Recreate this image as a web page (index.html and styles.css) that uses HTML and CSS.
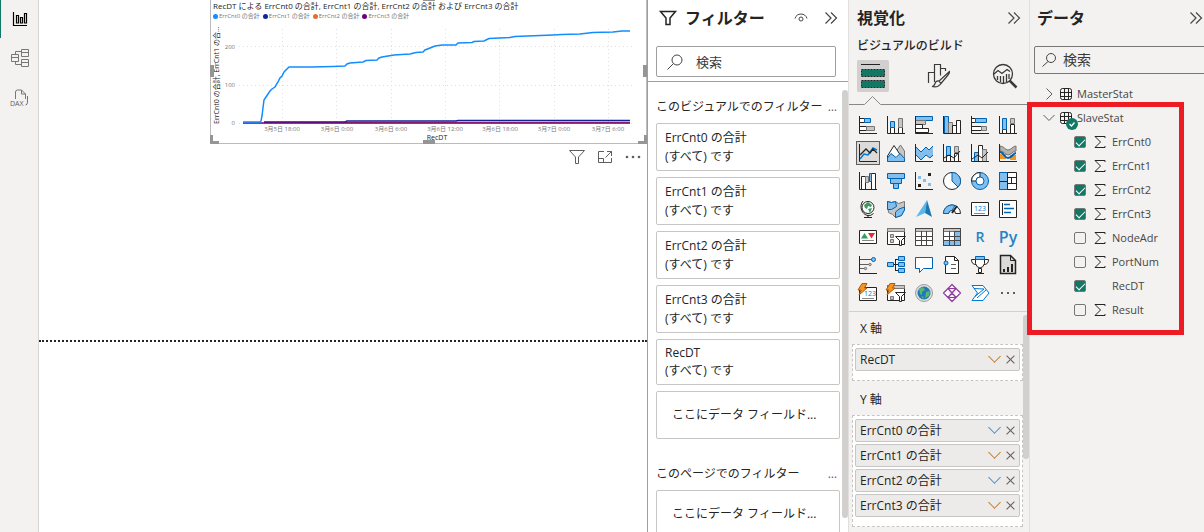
FILE: index.html
```html
<!DOCTYPE html>
<html lang="ja">
<head>
    <meta charset="UTF-8">
    <meta name="viewport" content="width=device-width, initial-scale=1">
    <title>レポート</title>
    <link rel="stylesheet" href="styles.css">
</head>
<body>
<div class="app">

    <nav class="rail">
        <button class="rail-btn active" aria-label="レポート">
            <svg width="18" height="18" viewBox="0 0 18 18"><path d="M2.500 2v13.500H16M5.500 13V5.500h2V13zM9.500 13V7.500h2V13zM13.500 13V3.500h2V13z" fill="none" stroke="#000" stroke-width="1.200"/></svg>
        </button>
        <button class="rail-btn" aria-label="モデル">
            <svg width="18" height="18" viewBox="0 0 18 18"><path d="M.5 5.500h7v7h-7zM.5 8.500h7M10.500.5h7v7h-7zM10.500 3.500h7M10.500 10.500h7v7h-7zM10.500 13.500h7M4.500 5.500v-3h6M4.500 12.500v3h6" fill="none" stroke="#797775"/></svg>
        </button>
        <button class="rail-btn" aria-label="DAX">
            <svg width="20" height="18" viewBox="0 0 20 18"><path d="M5.500 10V3q0-2 2-2h4l4 4v5M11.500 1v4h4M17.500 7v6q0 3-2 3" fill="none" stroke="#797775"/><text x="0" y="17" class="dax">DAX</text></svg>
        </button>
    </nav>

    <main class="canvas">
        <div class="page">
            <div class="visual">
                <h1 class="visual-title">RecDT による ErrCnt0 の合計, ErrCnt1 の合計, ErrCnt2 の合計 および ErrCnt3 の合計</h1>
                <ul class="legend">
                    <li><i class="dot s0"></i>ErrCnt0 の合計</li>
                    <li><i class="dot s1"></i>ErrCnt1 の合計</li>
                    <li><i class="dot s2"></i>ErrCnt2 の合計</li>
                    <li><i class="dot s3"></i>ErrCnt3 の合計</li>
                </ul>
                <svg class="plot" viewBox="211 22 435 120">
                    <path class="grid" d="M239 46.500H632M239 85.500H632M239 123.500H632M282.500 29v94M336.500 29v94M391.500 29v94M445.500 29v94M499.500 29v94M554.500 29v94M608.500 29v94"/>
                    <g class="tick end">
                        <text x="235" y="49">200</text>
                        <text x="235" y="87">100</text>
                        <text x="235" y="125">0</text>
                    </g>
                    <g class="tick mid">
                        <text x="282" y="131">3月5日 18:00</text>
                        <text x="337" y="131">3月6日 0:00</text>
                        <text x="391" y="131">3月6日 6:00</text>
                        <text x="445" y="131">3月6日 12:00</text>
                        <text x="500" y="131">3月6日 18:00</text>
                        <text x="554" y="131">3月7日 0:00</text>
                        <text x="608" y="131">3月7日 6:00</text>
                    </g>
                    <text class="axis mid" x="437" y="140">RecDT</text>
                    <text class="axis" transform="translate(219 124) rotate(-90)">ErrCnt0 の合計, ErrCnt1 の合…</text>
                    <path class="line" stroke="#e66c37" d="M264 122.500H630"/>
                    <path class="line" stroke="#12239e" d="M264 122H345L347 121H456L458 120.500H630"/>
                    <path class="line" stroke="#6b007b" d="M243 123H630"/>
                    <path class="line" stroke="#118dff" d="M243 122H260L261 121L262 116L264 100L266 97L270 91L272 89L275 87L278 82L280 78L282 76L284 72L289 67H312L333 66.500L345 66L347 64L350 63L363 62L366 60.500L377 60L379 58L382 57L388 56L394 55L410 54L416 52.500L423 52L425 50L430 48L435 46L442 45H456L458 43L472 42.500L474 41.500L484 41L489 38.500L510 37.500L515 36.500L553 35L562 34.500L580 34L593 32.500L613 32L622 31H630"/>
                </svg>
                <span class="handle t"></span><span class="handle l"></span><span class="handle r"></span><span class="handle b"></span>
                <span class="corner bl"></span><span class="corner br"></span>
            </div>
            <div class="visual-tools">
                <button aria-label="フィルター"><svg width="16" height="16" viewBox="0 0 16 16"><path d="M.5 1.500h15L9.500 8v6.500h-3V8z" fill="none" stroke="#605e5c"/></svg></button>
                <button aria-label="フォーカス モード"><svg width="16" height="16" viewBox="0 0 16 16"><path d="M7 2.500H1.500v11h13V9M1.500 9.500h5v4M8.500 8.500l6-6M10 2.500h4.500V7" fill="none" stroke="#605e5c"/></svg></button>
                <button aria-label="その他のオプション"><svg width="16" height="16" viewBox="0 0 16 16" fill="#605e5c"><circle cx="2" cy="8" r="1.300"/><circle cx="8" cy="8" r="1.300"/><circle cx="14" cy="8" r="1.300"/></svg></button>
            </div>
        </div>
    </main>

    <section class="filters">
        <header class="panel-head">
            <svg width="18" height="18" viewBox="0 0 18 18"><path d="M1.500 2.500h15L11 9v6.500H7V9z" fill="none" stroke="#252423" stroke-width="1.500"/></svg>
            <h2>フィルター</h2>
            <button class="eye" aria-label="表示"><svg width="14" height="14" viewBox="0 0 14 14"><path d="M1 7.500C2.500 1.500 11.500 1.500 13 7.500" fill="none" stroke="#484644"/><circle cx="7" cy="8" r="2" fill="none" stroke="#484644"/></svg></button>
            <button aria-label="折りたたむ"><svg width="14" height="14" viewBox="0 0 14 14"><path d="M1.500 1.500L7 7l-5.500 5.500M7 1.500L12.500 7 7 12.500" fill="none" stroke="#484644" stroke-width="1.200"/></svg></button>
        </header>
        <label class="search">
            <svg width="16" height="16" viewBox="0 0 16 16"><circle cx="10" cy="6" r="5" fill="none" stroke="#484644"/><path d="M6.500 9.500L.5 15.500" stroke="#484644"/></svg>
            <input type="text" placeholder="検索" aria-label="検索">
        </label>
        <div class="filter-body">
            <div class="filter-list">
                <h3>このビジュアルでのフィルター<button aria-label="その他">…</button></h3>
                <div class="card"><p>ErrCnt0 の合計</p><p>(すべて) です</p></div>
                <div class="card"><p>ErrCnt1 の合計</p><p>(すべて) です</p></div>
                <div class="card"><p>ErrCnt2 の合計</p><p>(すべて) です</p></div>
                <div class="card"><p>ErrCnt3 の合計</p><p>(すべて) です</p></div>
                <div class="card"><p class="short">RecDT</p><p>(すべて) です</p></div>
                <div class="card drop">ここにデータ フィールド...</div>
                <h3 class="second">このページでのフィルター<button aria-label="その他">…</button></h3>
                <div class="card drop">ここにデータ フィールド...</div>
            </div>
            <div class="scroll"></div>
        </div>
    </section>

    <section class="viz">
        <header class="panel-head">
            <h2>視覚化</h2>
            <button aria-label="折りたたむ"><svg width="14" height="14" viewBox="0 0 14 14"><path d="M1.500 1.500L7 7l-5.500 5.500M7 1.500L12.500 7 7 12.500" fill="none" stroke="#484644" stroke-width="1.200"/></svg></button>
        </header>
        <h3 class="build">ビジュアルのビルド</h3>
        <div class="tabs">
            <button class="tab on" aria-label="ビルド"><svg width="24" height="26" viewBox="0 0 24 26"><path d="M0 1.500h19" stroke="#252423"/><path d="M.5 6.500h23v7H.5zM.5 17.500h23v7H.5z" fill="#117865" stroke="#252423" stroke-dasharray="2 1"/></svg></button>
            <button class="tab" aria-label="書式"><svg width="24" height="26" viewBox="0 0 24 26"><path d="M1.500 20V9.500h6V19M7.500 9.500v-8h6v11M13.500 5.500h5V8M22.500 8.500L12 18l2 2.500L21 12q2-2.500 1.500-3.500zM12 18q-3-.5-4 2.500t-3 3q6 1.500 9-3" fill="none" stroke="#3b3a39" stroke-width="1.200"/></svg></button>
            <button class="tab" aria-label="分析"><svg width="26" height="26" viewBox="0 0 26 26"><circle cx="11" cy="11" r="9.500" fill="none" stroke="#3b3a39" stroke-width="1.300"/><path d="M2 11l4-3.500 4 3 5-4 3 2M5.500 17v-4M8.500 19v-6M11.500 20v-7M14.500 19v-8M17 16v-5" fill="none" stroke="#3b3a39" stroke-width="1.300"/><path d="M17.500 17.500l7 7" stroke="#3b3a39" stroke-width="2.500"/></svg></button>
        </div>
        <svg class="caret" width="180" height="10" viewBox="0 0 180 10"><path d="M0 9.500h15.500l8-8 8 8H180" fill="none" stroke="#8a8886"/></svg>

        <div class="gallery">
            <button><svg viewBox="0 0 18 18"><path class="w" d="M.5 2.500h5v4h-5zM.5 10.500h7v4h-7z"/><path class="b" d="M5.500 2.500h6v4h-6z"/><path class="g" d="M7.500 10.500h8v4h-8z"/><path class="k" d="M.5 0v17.500H18"/></svg></button>
            <button><svg viewBox="0 0 18 18"><path class="w" d="M3.500 11.500h4v6h-4zM11.500 11.500h4v6h-4z"/><path class="b" d="M3.500 5.500h4v6h-4z"/><path class="g" d="M11.500 2.500h4v9h-4z"/><path class="k" d="M.5 0v17.500H18"/></svg></button>
            <button><svg viewBox="0 0 18 18"><path class="b" d="M.5.5h17v4H.5z"/><path class="g" d="M.5 4.500h10v4H.5z"/><path class="w" d="M.5 8.500h7v4h-7zM.5 12.500h13v4H.5z"/><path class="k" d="M.5 0v17.500H18"/></svg></button>
            <button><svg viewBox="0 0 18 18"><path class="b" d="M1.500.5h4v17h-4z"/><path class="g" d="M5.500 6.500h4v11h-4z"/><path class="w" d="M9.500 9.500h4v8h-4zM13.500 4.500h4v13h-4z"/><path class="k" d="M.5 0v17.500H18"/></svg></button>
            <button><svg viewBox="0 0 18 18"><path class="w" d="M.5 2.500h4v4h-4zM.5 10.500h10v4H.5z"/><path class="b" d="M4.500 2.500h11v4h-11z"/><path class="g" d="M10.500 10.500h5v4h-5z"/><path class="k" d="M.5 0v17.500H18"/></svg></button>
            <button><svg viewBox="0 0 18 18"><path class="w" d="M3.500 13.500h4v4h-4zM11.500 8.500h4v9h-4z"/><path class="b" d="M3.500 2.500h4v11h-4z"/><path class="g" d="M11.500 2.500h4v5h-4z"/><path class="k" d="M.5 0v17.500H18"/></svg></button>

            <button class="on"><svg viewBox="0 0 18 18"><path d="M1 15l4-5 4 1 5-7 4 2" fill="none" stroke="#0078d4" stroke-width="1.500"/><path d="M1 11l6-6 4 4 3-4 4 4" fill="none" stroke="#252423" stroke-width="1.300"/><path class="k" d="M.5 0v17.500H18"/></svg></button>
            <button><svg viewBox="0 0 18 18"><path class="g" d="M8 9l5.500-8L17.500 7v10.500z"/><path class="w" d="M.5 12L7 1.500l7 10.500-3 5H.5z"/><path class="b" d="M.5 17.500V14L4 9.500l5 4 4-4 4.500 5v3z"/></svg></button>
            <button><svg viewBox="0 0 18 18"><path d="M1 3l5 5 5-5 3 3 4-4v10l-3 2-4-3-5 5-5-5z" fill="#83beec"/><path d="M1 3l5 5 5-5 3 3 4-4M1 11l5 5 5-5 4 3 3-3" fill="none" stroke="#0063b1"/><path class="k" d="M.5 0v17.500H18"/></svg></button>
            <button><svg viewBox="0 0 18 18"><path class="b" d="M3.500 2.500h4v9h-4z"/><path class="g" d="M11.500 2.500h4v6h-4z"/><path class="w" d="M3.500 11.500h4v6h-4zM11.500 9.500h4v8h-4z"/><path class="k" d="M.5 0v17.500H18M1 14l5-3 5 3 6-7"/></svg></button>
            <button><svg viewBox="0 0 18 18"><path class="b" d="M3.500 8.500h4v9h-4z"/><path class="w" d="M7.500 1.500h4v16h-4z"/><path class="g" d="M11.500 5.500h4v12h-4z"/><path class="k" d="M.5 0v17.500H18M1 15l6-4 4 3 6-6"/></svg></button>
            <button><svg viewBox="0 0 18 18"><path d="M1 10h6v5H1zM11 11h6v5h-6z" fill="#f7941d"/><path d="M1 2c4 0 5 4 8 4s5-4 8-4v5c-3 0-5 4-8 4S5 7 1 7z" fill="#b3b0ad" stroke="#797775"/><path d="M1 8c4 0 4 6 8 6s5-5 8-5" fill="none" stroke="#0063b1" stroke-width="2"/><path class="k" d="M.5 0v17.500H18"/></svg></button>

            <button><svg viewBox="0 0 18 18"><path class="w" d="M2.500 4.500h4v13h-4zM12.500 1.500h4v16h-4z"/><path class="g" d="M6.500 4.500h3v6h-3z"/><path class="b" d="M10.500 1.500h2v8h-2z"/><path class="k" d="M.5 0v17.500H18"/></svg></button>
            <button><svg viewBox="0 0 18 18"><path class="b" d="M.5 1.500h17v5H.5zM3.500 6.500h11v5h-11zM6.500 11.500h5v5h-5z"/></svg></button>
            <button><svg viewBox="0 0 18 18"><path d="M13 1h3v3h-3zM3 12h3v3H3z" fill="#252423"/><path d="M3 4h3v3H3zM8 7h3v3H8zM13 11h3v3h-3z" fill="#83beec"/><path class="k" d="M.5 0v17.500H18"/></svg></button>
            <button><svg viewBox="0 0 18 18"><circle class="w" cx="9" cy="9" r="8.500"/><path class="b" d="M9 .5A8.500 8.500 0 0 1 15 15L9 9z"/></svg></button>
            <button><svg viewBox="0 0 18 18"><circle class="b" cx="9" cy="9" r="8.500"/><path class="w" d="M9 .5A8.500 8.500 0 0 0 .5 9H5a4 4 0 0 1 4-4z"/><circle cx="9" cy="9" r="4" fill="#fff" stroke="#0063b1"/></svg></button>
            <button><svg viewBox="0 0 18 18"><path class="w" d="M.5.5h17v17H.5z"/><path class="b" d="M.5.5h8v17h-8z"/><path class="k" d="M8.500.5v17M8.500 5.500h9M.5 9.500h8M12.500 5.500v6M8.500 11.500h9"/></svg></button>

            <button><svg viewBox="0 0 18 18"><circle class="w" cx="9" cy="7.500" r="6"/><path d="M5 5l4-3 4 3-1 2-3-1-1 3-2-1zM9 9l4-1-2 5z" fill="#3a9b5c"/><path class="k" d="M4 1C-.5 6 3 15 9 15.500q3 .5 5.500-2M9 15v2.500M5 17.500h8"/></svg></button>
            <button><svg viewBox="0 0 18 18"><path class="g" d="M.5 1.500l4 1 4-1 3 2 6-2v8l-3 6-6 2-3-3-4-2z"/><path class="b" d="M.5 1.500l4 1 4-1 1 5-5 3H.5zM12 9l5.500-2v3l-3 5.500-6 2V12z"/></svg></button>
            <button><svg viewBox="0 0 18 18"><path d="M12 0L1 17l9-4z" fill="#5cb8e6"/><path d="M12 0l5 17-7-4z" fill="#1e77b5"/></svg></button>
            <button><svg viewBox="0 0 18 18"><path class="w" d="M.5 13.500a8.500 8.500 0 0 1 17 0h-5a3.500 3.500 0 0 0-7 0z"/><path class="b" d="M.5 13.500A8.500 8.500 0 0 1 12 5.500l-3 5a3.500 3.500 0 0 0-3.500 3z"/><path d="M9 13l5-7" stroke="#252423" stroke-width="2"/></svg></button>
            <button><svg viewBox="0 0 18 18"><path class="w" d="M.5 2.500h17v13H.5z"/><text x="3" y="11" class="num">123</text><path d="M3 13.500h11" stroke="#8a8886"/></svg></button>
            <button><svg viewBox="0 0 18 18"><path class="w" d="M.5.5h17v17H.5z"/><path class="k" d="M3.500 3v12"/><path d="M5 4.500h6M5 8.500h10M5 12.500h7" stroke="#0063b1" stroke-width="1.500"/></svg></button>

            <button><svg viewBox="0 0 18 18"><path class="w" d="M.5 2.500h17v13H.5z"/><path d="M2 10.500L5.500 5 9 10.500z" fill="#2e9e5b"/><path d="M9 5h7l-3.500 5.500z" fill="#e02b35"/><path d="M3 12.500h12" stroke="#8a8886"/></svg></button>
            <button><svg viewBox="0 0 18 18"><path class="w" d="M.5.5h17v16H.5z"/><path class="g" d="M.5.5h17v3H.5zM3.500 6.500h3v3h-3zM3.500 11.500h3v3h-3z"/><path class="w" d="M8.500 8.500h10l-4 4v5h-2v-5z"/></svg></button>
            <button><svg viewBox="0 0 18 18"><path class="w" d="M.5.5h17v17H.5z"/><path class="g" d="M.5.5h17v3H.5z"/><path class="k thin" d="M6.500 3v14M11.500 3v14M1 8.500h16M1 12.500h16M.5.5h17v17H.5z"/></svg></button>
            <button><svg viewBox="0 0 18 18"><path class="w" d="M.5.5h17v17H.5z"/><path class="g" d="M.5.5h17v3H.5z"/><path class="b" d="M11.500 3.500h6v14H.5v-5h11z"/><path class="k thin" d="M6.500 3v14M11.500 3v14M1 8.500h16M1 12.500h16M.5.5h17v17H.5z"/></svg></button>
            <button class="letter r">R</button>
            <button class="letter">Py</button>

            <button><svg viewBox="0 0 18 18"><path class="k" d="M.5 0v17.500H18"/><path d="M1 3.500h12" stroke="#0063b1"/><path d="M1 8.500h9M1 12.500h5" stroke="#605e5c"/><circle class="b" cx="14.500" cy="3.500" r="2"/><circle class="g" cx="11" cy="8.500" r="1.200"/><circle class="g" cx="6.500" cy="12.500" r="1.200"/></svg></button>
            <button><svg viewBox="0 0 18 18"><path class="k" d="M6 8.500h5M8.500 3v12M8 3.500h4M8 14.500h4"/><path class="b" d="M.5 6.500h6v4h-6zM11.500.5h6v4h-6zM11.500 6.500h6v4h-6zM11.500 12.500h6v4h-6z"/></svg></button>
            <button><svg viewBox="0 0 18 18"><path d="M.5 1.500h17v11h-9l-4 4v-4h-4z" fill="#fff" stroke="#0063b1"/></svg></button>
            <button><svg viewBox="0 0 18 18"><path class="w" d="M2.500.5h9l4 4v13h-13z"/><path class="k" d="M11.500.5v4h4"/><path d="M8 8.500h5M8 12.500h5" stroke="#605e5c"/><circle class="b" cx="3" cy="7" r="2"/></svg></button>
            <button><svg viewBox="0 0 18 18"><path class="w" d="M4.500 1.500h9v6q-1 4-4.500 4.500-3.500-.5-4.500-4.500zM4.500 3.500h-4q0 5 4.500 5M13.500 3.500h4q0 5-4.500 5M7.500 12.500h3v4h-3zM5 17.500h8"/><path class="b" d="M4.500.5h9v3h-9z"/></svg></button>
            <button><svg viewBox="0 0 18 18"><path d="M1.500-.5h10l5 5v13h-15z" fill="#dddbd9" stroke="#252423" stroke-width="1.500"/><path class="k" d="M11.500-.5v5h5"/><path d="M4 13h2v3H4zM8 11h2v5H8zM12 8h2v8h-2z" fill="#252423"/></svg></button>

            <button><svg viewBox="0 0 18 18"><path class="w" d="M.5 3.500h17v13H.5z"/><text x="5" y="12" class="num">123</text><path d="M3 14.500h12" stroke="#8a8886"/><path class="o" d="M3-.5h5L5.500 4H8l-8 7 2-5H-1z"/></svg></button>
            <button><svg viewBox="0 0 18 18"><path class="w" d="M.5 1.500h17v15H.5z"/><path class="g" d="M.5 1.500h17v3H.5zM3.500 12.500h3v3h-3z"/><path class="w" d="M8.500 8.500h10l-4 4v5h-2v-5z"/><path class="o" d="M3-.5h5L5.500 4H8l-8 7 2-5H-1z"/></svg></button>
            <button><svg viewBox="0 0 18 18"><circle cx="9" cy="9" r="8.500" fill="#ddd" stroke="#a19f9d"/><circle cx="9" cy="9" r="6.500" fill="#1f78b8"/><path d="M4 5l4-2 2 3-3 2v3l-2-1zM11 8l4-1-1 5-4 2zM6 12l3 1-1 2z" fill="#5bb56b"/></svg></button>
            <button><svg viewBox="0 0 18 18"><path d="M5 4.500L9 .5l4 4M13 4.500l4.500 4.500-4.500 4.500M13 13.500l-4 4-4-4M5 13.500L.5 9 5 4.500M5 4.500L13 13.500M13 4.500L5 13.500M5 4.500h8M5 13.500h8" fill="#fff" stroke="#8e3a9d" stroke-width="1.200" stroke-linejoin="round"/></svg></button>
            <button><svg viewBox="0 0 18 18"><path d="M1 1.500h11l6 7.500-6 7.500H1L6.500 9z" fill="#fff" stroke="#0078d4"/><path d="M3 4.500l10 .5-9 7.500M15 6l-9 8" fill="none" stroke="#0078d4"/></svg></button>
            <button><svg viewBox="0 0 18 18" fill="#605e5c"><path d="M2 8h2v2H2zM8 8h2v2H8zM14 8h2v2h-2z"/></svg></button>
        </div>

        <div class="wells">
            <div class="well-list">
                <h4>X 軸</h4>
                <div class="well">
                    <div class="pill or"><span>RecDT</span><button class="v" aria-label="メニュー"></button><button class="x" aria-label="削除"></button></div>
                </div>
                <h4>Y 軸</h4>
                <div class="well">
                    <div class="pill bl"><span>ErrCnt0 の合計</span><button class="v" aria-label="メニュー"></button><button class="x" aria-label="削除"></button></div>
                    <div class="pill or"><span>ErrCnt1 の合計</span><button class="v" aria-label="メニュー"></button><button class="x" aria-label="削除"></button></div>
                    <div class="pill bl"><span>ErrCnt2 の合計</span><button class="v" aria-label="メニュー"></button><button class="x" aria-label="削除"></button></div>
                    <div class="pill or"><span>ErrCnt3 の合計</span><button class="v" aria-label="メニュー"></button><button class="x" aria-label="削除"></button></div>
                </div>
            </div>
            <div class="scroll"></div>
        </div>
    </section>

    <section class="data">
        <header class="panel-head">
            <h2>データ</h2>
            <button aria-label="折りたたむ"><svg width="14" height="14" viewBox="0 0 14 14"><path d="M1.500 1.500L7 7l-5.500 5.500M7 1.500L12.500 7 7 12.500" fill="none" stroke="#484644" stroke-width="1.200"/></svg></button>
        </header>
        <label class="search">
            <svg width="14" height="14" viewBox="0 0 14 14"><circle cx="9" cy="5" r="4.500" fill="none" stroke="#484644"/><path d="M6 8.500L.5 13.500" stroke="#484644"/></svg>
            <input type="text" placeholder="検索" aria-label="検索">
        </label>
        <div class="row table">
            <svg width="12" height="12" viewBox="0 0 12 12"><path d="M3.500.5L9 6l-5.500 5.500" fill="none" stroke="#605e5c"/></svg>
            <svg width="12" height="12" viewBox="0 0 12 12"><path d="M2.500.5h7q2 0 2 2v7q0 2-2 2h-7q-2 0-2-2v-7q0-2 2-2zM4.500.5v11M8.500.5v11M.5 4.500h11M.5 8.500h11" fill="none" stroke="#252423"/></svg>
            <span>MasterStat</span>
        </div>
        <div class="group">
            <div class="row table">
                <svg width="12" height="12" viewBox="0 0 12 12"><path d="M.5 3L6 8.500 11.500 3" fill="none" stroke="#605e5c"/></svg>
                <span class="badged">
                    <svg width="12" height="12" viewBox="0 0 12 12"><path d="M2.500.5h7q2 0 2 2v7q0 2-2 2h-7q-2 0-2-2v-7q0-2 2-2zM4.500.5v11M8.500.5v11M.5 4.500h11M.5 8.500h11" fill="none" stroke="#252423"/></svg>
                    <svg class="badge" width="12" height="12" viewBox="0 0 12 12"><circle cx="6" cy="6" r="6" fill="#117865"/><path d="M3.500 6l2 2L8.500 4.500" fill="none" stroke="#fff" stroke-width="1.300"/></svg>
                </span>
                <span>SlaveStat</span>
            </div>
            <label class="row"><input type="checkbox" checked><svg class="sum" viewBox="0 0 12 12"><path d="M11 2V.5H1L6.500 6 1 11.500h10V10"/></svg>ErrCnt0</label>
            <label class="row"><input type="checkbox" checked><svg class="sum" viewBox="0 0 12 12"><path d="M11 2V.5H1L6.500 6 1 11.500h10V10"/></svg>ErrCnt1</label>
            <label class="row"><input type="checkbox" checked><svg class="sum" viewBox="0 0 12 12"><path d="M11 2V.5H1L6.500 6 1 11.500h10V10"/></svg>ErrCnt2</label>
            <label class="row"><input type="checkbox" checked><svg class="sum" viewBox="0 0 12 12"><path d="M11 2V.5H1L6.500 6 1 11.500h10V10"/></svg>ErrCnt3</label>
            <label class="row"><input type="checkbox"><svg class="sum" viewBox="0 0 12 12"><path d="M11 2V.5H1L6.500 6 1 11.500h10V10"/></svg>NodeAdr</label>
            <label class="row"><input type="checkbox"><svg class="sum" viewBox="0 0 12 12"><path d="M11 2V.5H1L6.500 6 1 11.500h10V10"/></svg>PortNum</label>
            <label class="row"><input type="checkbox" checked><svg class="sum" viewBox="0 0 12 12"></svg>RecDT</label>
            <label class="row"><input type="checkbox"><svg class="sum" viewBox="0 0 12 12"><path d="M11 2V.5H1L6.500 6 1 11.500h10V10"/></svg>Result</label>
        </div>
    </section>
</div>
</body>
</html>
```
FILE: styles.css
```css
* {
    box-sizing: border-box;
}
body {
    margin: 0;
    font: 12px/18px "Open Sans", "Noto Sans CJK JP", sans-serif;
    color: #252423;
    background: #fff;
}
h1, h2, h3, h4, p, ul {
    margin: 0;
    padding: 0;
    font-size: 12px;
    font-weight: normal;
}
button {
    border: 0;
    padding: 0;
    background: none;
    font: inherit;
    color: inherit;
    display: flex;
    align-items: center;
    justify-content: center;
}
svg {
    display: block;
    flex: none;
    overflow: visible;
}
.app {
    display: flex;
    height: 100vh;
    overflow: hidden;
}

/* left rail */
.rail {
    width: 39px;
    flex: none;
    background: #f3f2f1;
    border-right: 1px solid #d8d6d4;
}
.rail-btn {
    width: 100%;
    height: 40px;
    border-left: 1px solid transparent;
}
.rail-btn.active {
    height: 38px;
    border-left-color: #117865;
}
.dax {
    font: 7px "Open Sans", sans-serif;
    fill: #605e5c;
}

/* report canvas */
.canvas {
    flex: 1;
    min-width: 0;
}
.page {
    height: 342px;
    border-bottom: 2px dotted #252423;
}
.visual {
    position: relative;
    width: 437px;
    height: 144px;
    margin-left: auto;
    border: 1px solid #bdbbb9;
    border-top: 0;
}
.visual-title {
    padding-left: 2px;
    font-size: 8px;
    line-height: 11px;
    white-space: nowrap;
}
.legend {
    display: flex;
    gap: 3px;
    padding-left: 2px;
    list-style: none;
    font-size: 6px;
    line-height: 11px;
    color: #797775;
}
.legend li {
    display: flex;
    align-items: center;
    gap: 1px;
}
.dot {
    width: 5px;
    height: 5px;
    border-radius: 50%;
}
.s0 { background: #118dff; }
.s1 { background: #12239e; }
.s2 { background: #e66c37; }
.s3 { background: #6b007b; }
.plot {
    width: 100%;
    height: 120px;
}
.grid {
    fill: none;
    stroke: #e1dfdd;
    stroke-dasharray: 1 3;
}
.tick {
    font-size: 6px;
    fill: #797775;
}
.axis {
    font-size: 7px;
    fill: #252423;
}
.end { text-anchor: end; }
.mid { text-anchor: middle; }
.line {
    fill: none;
    stroke-width: 1.5;
}
.handle, .corner {
    position: absolute;
    background: #979593;
}
.handle.t, .handle.b {
    left: 50%;
    width: 12px;
    height: 4px;
    margin-left: -6px;
}
.handle.t { top: -3px; }
.handle.b { bottom: -1px; }
.handle.l, .handle.r {
    top: 65px;
    width: 4px;
    height: 12px;
}
.handle.l { left: -1px; }
.handle.r { right: -1px; }
.corner {
    bottom: -1px;
    width: 9px;
    height: 9px;
    background: none;
    border: solid #979593;
}
.corner.bl {
    left: -1px;
    border-width: 0 0 3px 3px;
}
.corner.br {
    right: -1px;
    border-width: 0 3px 3px 0;
}
.visual-tools {
    display: flex;
    justify-content: flex-end;
    gap: 12px;
    padding: 5px 6px 0 0;
}

/* shared panel parts */
.panel-head {
    display: flex;
    align-items: center;
    height: 36px;
    padding: 0 10px 0 8px;
}
.panel-head h2 {
    flex: 1;
    font-size: 16px;
    line-height: 24px;
    font-weight: bold;
}
.search {
    display: flex;
    align-items: center;
    gap: 13px;
    padding: 0 10px;
    border: 1px solid #a19f9d;
    border-radius: 2px;
}
.search input {
    flex: 1;
    min-width: 0;
    padding: 0;
    border: 0;
    outline: 0;
    background: none;
    font: inherit;
    font-size: 13px;
}
.search input::placeholder {
    color: #3b3a39;
    opacity: 1;
}
.scroll {
    flex: none;
    width: 6px;
    border-radius: 3px;
    background: #d2d0ce;
}

/* filters */
.filters {
    display: flex;
    flex-direction: column;
    width: 201px;
    flex: none;
    border-left: 1px solid #a19f9d;
}
.filters .panel-head {
    gap: 8px;
    padding-left: 11px;
}
.filters .eye {
    margin-right: 8px;
}
.filters .search {
    flex: none;
    height: 31px;
    margin: 10px 12px 4px 8px;
}
.filter-body {
    display: flex;
    flex: 1;
    min-height: 0;
    border-top: 1px solid #a19f9d;
}
.filter-body .scroll {
    margin: 8px 0 14px;
}
.filter-list {
    flex: 1;
    min-width: 0;
    overflow: hidden;
    padding: 16px 2px 0 8px;
}
.filter-list h3 {
    display: flex;
    justify-content: space-between;
    padding-right: 3px;
    margin-bottom: 7px;
    white-space: nowrap;
}
.filter-list h3.second {
    margin-top: 26px;
}
.filter-list h3 button {
    color: #605e5c;
}
.card {
    padding: 4px 8px;
    margin-bottom: 6px;
    border: 1px solid #c8c6c4;
    border-radius: 2px;
    line-height: 19px;
    white-space: nowrap;
}
.card .short {
    line-height: 17px;
}
.card.drop {
    padding: 14px 15px;
    line-height: 18px;
}

/* visualizations */
.viz, .data {
    flex: none;
    display: flex;
    flex-direction: column;
    background: #f3f2f1;
    border-left: 1px solid #e1dfdd;
}
.viz {
    width: 181px;
}
.viz .panel-head {
    padding-right: 8px;
}
.build {
    padding-left: 8px;
    font-weight: 500;
    line-height: 20px;
}
.tabs {
    display: flex;
    justify-content: space-between;
    padding: 4px 8px 3px;
}
.tab {
    width: 32px;
    height: 32px;
}
.tab.on {
    background: #d2d0ce;
    border-radius: 2px;
}
.caret {
    width: 100%;
}
.gallery {
    display: grid;
    grid-template-columns: repeat(6, 28px);
    grid-auto-rows: 28px;
    padding: 6px 5px 4px;
    border-bottom: 1px solid #d2d0ce;
}
.gallery button {
    width: 24px;
    height: 24px;
    margin: 2px;
}
.gallery .on {
    background: #dddbd9;
    outline: 1px solid #605e5c;
    outline-offset: -1px;
}
.gallery svg {
    width: 18px;
    height: 18px;
}
.gallery .letter {
    font: 600 16px/24px "Open Sans", sans-serif;
    color: #2484c6;
}
.gallery .r {
    font-size: 14px;
}
.k { fill: none; stroke: #252423; }
.k.thin { stroke: #484644; }
.w { fill: #fff; stroke: #252423; }
.b { fill: #83beec; stroke: #0063b1; }
.g { fill: #c8c6c4; stroke: #797775; }
.o { fill: #f7941d; stroke: #a85a10; }
.num {
    font: 7px "Open Sans", sans-serif;
    fill: #0078d4;
}
.wells {
    display: flex;
    flex: 1;
    min-height: 0;
}
.wells .scroll {
    height: 144px;
    margin-top: 3px;
}
.well-list {
    flex: 1;
    min-width: 0;
    padding-left: 3px;
}
.well-list h4 {
    padding: 8px 8px 6px;
}
.well {
    display: flex;
    flex-direction: column;
    gap: 2px;
    padding: 3px 2px 9px;
    margin-bottom: 2px;
    border: 1px dashed #c8c6c4;
    background: #fff;
}
.pill {
    display: flex;
    align-items: center;
    height: 23px;
    padding: 0 1px 0 4px;
    border: 1px solid #c8c6c4;
    border-radius: 2px;
    background: #edebe9;
    white-space: nowrap;
}
.pill span {
    flex: 1;
}
.pill button {
    width: 16px;
    height: 16px;
    position: relative;
}
.v::before {
    content: "";
    width: 8px;
    height: 8px;
    margin-top: -6px;
    border: solid #c27d3a;
    border-width: 0 1px 1px 0;
    transform: rotate(45deg);
}
.bl .v::before {
    border-color: #4a90c8;
}
.x::before, .x::after {
    content: "";
    position: absolute;
    width: 11px;
    height: 1px;
    background: #605e5c;
    transform: rotate(45deg);
}
.x::after {
    transform: rotate(-45deg);
}

/* data */
.data {
    width: 175px;
}
.data .panel-head {
    padding: 0 1px 0 7px;
}
.data .search {
    flex: none;
    height: 28px;
    gap: 7px;
    padding: 0 7px;
    margin: 10px -2px 8px 4px;
    border-color: #797775;
}
.data .search input {
    font-size: 14px;
}
.row {
    display: flex;
    align-items: center;
    height: 24px;
    padding-left: 44px;
    font-size: 11px;
    color: #484644;
}
.row.table {
    gap: 5px;
    padding-left: 13px;
}
.badged {
    position: relative;
}
.badge {
    position: absolute;
    left: 6px;
    top: 6px;
}
.sum {
    width: 12px;
    height: 12px;
    margin: 0 6px 0 8px;
    fill: none;
    stroke: #252423;
}
.row input {
    appearance: none;
    display: flex;
    justify-content: center;
    width: 12px;
    height: 12px;
    margin: 0;
    border: 1px solid #797775;
    border-radius: 2px;
}
.row input:checked {
    background: #117865;
}
.row input:checked::after {
    content: "";
    width: 4px;
    height: 8px;
    border: solid #fff;
    border-width: 0 1px 1px 0;
    transform: rotate(45deg);
}
.group {
    position: relative;
}
.group::after {
    content: "";
    position: absolute;
    top: -4px;
    left: -3px;
    right: 20px;
    bottom: -13px;
    border: 5px solid #ed1c24;
    pointer-events: none;
}
```
